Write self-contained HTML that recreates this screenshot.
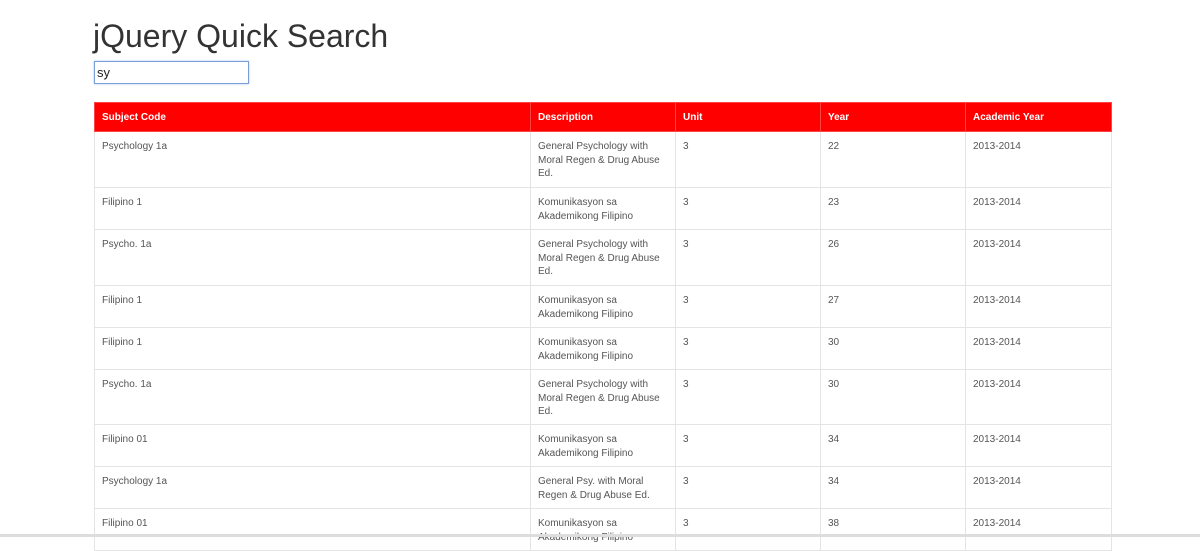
<!DOCTYPE html>
<html><head><style>
body{margin:0;width:1200px;height:537px;overflow:hidden;background:#fff;font-family:"Liberation Sans",Arial,sans-serif;color:#333;position:relative}
h1{position:absolute;left:93px;top:16px;margin:0;font-size:32px;font-weight:normal;line-height:40px;color:#333}
.in{position:absolute;left:94px;top:61px;width:151px;height:21px;border:1px solid #7a9fd6;box-shadow:0 0 2px #a8c4ee;font-size:13px;line-height:21px;padding-left:2px;box-sizing:content-box;color:#222}
table{position:absolute;left:94px;top:102px;border-collapse:collapse;table-layout:fixed;width:1017px}
th{background:#f00;color:#fff;font-size:10px;font-weight:bold;text-align:left;height:28px;padding:0 7px;border:1px solid #f44;box-sizing:border-box}
td{font-size:10px;line-height:13.5px;color:#555;vertical-align:top;padding:8px 7px 0;border:1px solid #e4e4e4;box-sizing:border-box}
.bar{position:absolute;left:0;top:534px;width:1200px;height:3px;background:#ddd;z-index:5}
</style></head><body>
<h1>jQuery Quick Search</h1>
<div class="in">sy</div>
<table>
<colgroup><col style="width:436px"><col style="width:145px"><col style="width:145px"><col style="width:145px"><col style="width:146px"></colgroup>
<tr style="height:29px"><th>Subject Code</th><th>Description</th><th>Unit</th><th>Year</th><th>Academic Year</th></tr>
<tr style="height:56px"><td>Psychology 1a</td><td>General Psychology with Moral Regen &amp; Drug Abuse Ed.</td><td>3</td><td>22</td><td>2013-2014</td></tr>
<tr style="height:42px"><td>Filipino 1</td><td>Komunikasyon sa Akademikong Filipino</td><td>3</td><td>23</td><td>2013-2014</td></tr>
<tr style="height:56px"><td>Psycho. 1a</td><td>General Psychology with Moral Regen &amp; Drug Abuse Ed.</td><td>3</td><td>26</td><td>2013-2014</td></tr>
<tr style="height:42px"><td>Filipino 1</td><td>Komunikasyon sa Akademikong Filipino</td><td>3</td><td>27</td><td>2013-2014</td></tr>
<tr style="height:42px"><td>Filipino 1</td><td>Komunikasyon sa Akademikong Filipino</td><td>3</td><td>30</td><td>2013-2014</td></tr>
<tr style="height:55px"><td>Psycho. 1a</td><td>General Psychology with Moral Regen &amp; Drug Abuse Ed.</td><td>3</td><td>30</td><td>2013-2014</td></tr>
<tr style="height:42px"><td>Filipino 01</td><td>Komunikasyon sa Akademikong Filipino</td><td>3</td><td>34</td><td>2013-2014</td></tr>
<tr style="height:42px"><td>Psychology 1a</td><td>General Psy. with Moral Regen &amp; Drug Abuse Ed.</td><td>3</td><td>34</td><td>2013-2014</td></tr>
<tr style="height:42px"><td>Filipino 01</td><td>Komunikasyon sa Akademikong Filipino</td><td>3</td><td>38</td><td>2013-2014</td></tr>
</table>
<div class="bar"></div>
</body></html>
